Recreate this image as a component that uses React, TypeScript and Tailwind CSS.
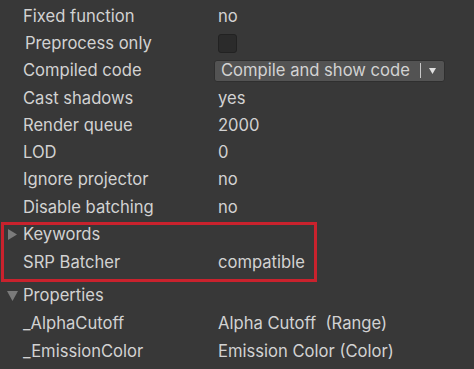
import React from "react"

const font = { fontFamily: "Inter, 'Noto Sans', sans-serif" }

function Row({ label, children, indent }: { label: string; children?: React.ReactNode; indent?: boolean }) {
  return (
    <div className="flex items-center h-[27.33px]">
      <div className={`w-[218px] shrink-0 ${indent ? "pl-[25px]" : "pl-[23px]"}`}>{label}</div>
      <div className="flex items-center">{children}</div>
    </div>
  )
}

function TriRight() {
  return (
    <svg width="10" height="11" viewBox="0 0 10 11" className="ml-[8px] mr-[5px]">
      <path d="M0 0 L9 5.5 L0 11 Z" fill="#7b7b7b" />
    </svg>
  )
}

function TriDown() {
  return (
    <svg width="11" height="10" viewBox="0 0 11 10" className="ml-[7px] mr-[5px]">
      <path d="M0 0 L11 0 L5.5 10 Z" fill="#7b7b7b" />
    </svg>
  )
}

export default function App() {
  return (
    <div className="w-[474px] h-[369px] bg-[#383838] text-[#d2d2d2] text-[16.6px] overflow-hidden pt-[2.3px]" style={font}>
      <Row label="Fixed function">no</Row>
      <Row label="Preprocess only" indent>
        <div className="w-[19px] h-[19px] rounded-[3px] bg-[#2b2b2b] border border-[#222]" />
      </Row>
      <div className="flex items-center h-[27.33px]">
        <div className="w-[214px] shrink-0 pl-[23px]">Compiled code</div>
        <div className="flex items-center h-[22px] w-[231px] rounded-[3px] bg-[#535353] border border-[#2f2f2f] pl-[6px]">
          <span className="w-[199px]">Compile and show code</span>
          <div className="w-px h-[15px] bg-[#c8c8c8]" />
          <svg width="7" height="6" viewBox="0 0 7 6" className="ml-[8px]">
            <path d="M0 0 L7 0 L3.5 6 Z" fill="#e0e0e0" />
          </svg>
        </div>
      </div>
      <Row label="Cast shadows">yes</Row>
      <Row label="Render queue">2000</Row>
      <Row label="LOD">0</Row>
      <Row label="Ignore projector">no</Row>
      <Row label="Disable batching">no</Row>

      <div className="mt-px ml-px w-[316px] border-[3px] border-[#c9222d]">
        <div className="flex items-center h-[19px] -ml-[4px]">
          <TriRight />
          <span>Keywords</span>
        </div>
        <div className="flex h-[35px] pt-[8px] leading-[20px]">
          <div className="w-[214px] shrink-0 pl-[19px]">SRP Batcher</div>
          <div>compatible</div>
        </div>
      </div>

      <div className="flex items-center h-[28px]">
        <TriDown />
        <span>Properties</span>
      </div>
      <div className="flex items-center h-[28px]">
        <div className="w-[218px] shrink-0 pl-[23px]">_AlphaCutoff</div>
        <div>Alpha Cutoff&nbsp; (Range)</div>
      </div>
      <div className="flex items-center h-[27px]">
        <div className="w-[218px] shrink-0 pl-[23px]">_EmissionColor</div>
        <div>Emission Color (Color)</div>
      </div>
    </div>
  )
}
